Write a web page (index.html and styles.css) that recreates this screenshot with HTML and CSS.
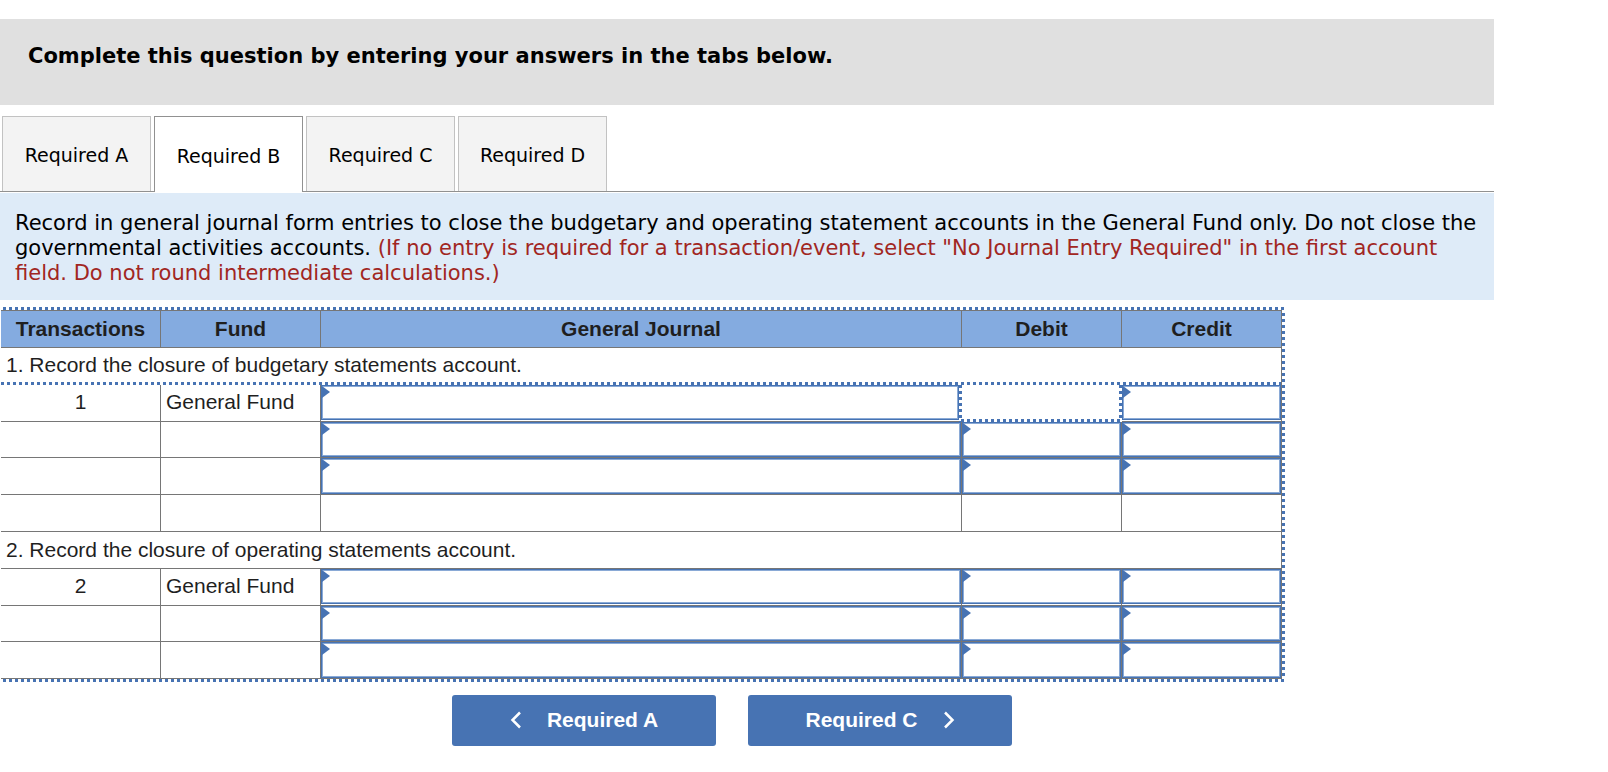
FILE: index.html
```html
<!DOCTYPE html>
<html lang="en">
<head>
<meta charset="utf-8">
<title>General journal entries</title>
<link rel="stylesheet" href="styles.css">
</head>
<body>
<main class="question">
  <h1 class="banner">Complete this question by entering your answers in the tabs below.</h1>

  <div class="tabs" role="tablist">
    <button class="tab" type="button" role="tab" aria-selected="false">Required A</button>
    <button class="tab tab-active" type="button" role="tab" aria-selected="true">Required B</button>
    <button class="tab" type="button" role="tab" aria-selected="false">Required C</button>
    <button class="tab" type="button" role="tab" aria-selected="false">Required D</button>
  </div>

  <p class="instructions">Record in general journal form entries to close the budgetary and operating statement accounts in the General Fund only. Do not close the governmental activities accounts. <span class="note">(If no entry is required for a transaction/event, select "No Journal Entry Required" in the first account field. Do not round intermediate calculations.)</span></p>

  <div class="sheet">
    <table class="journal">
      <colgroup><col class="narrow"><col class="narrow"><col><col class="narrow"><col class="narrow"></colgroup>
      <thead>
        <tr><th scope="col">Transactions</th><th scope="col">Fund</th><th scope="col">General Journal</th><th scope="col">Debit</th><th scope="col">Credit</th></tr>
      </thead>
      <tbody>
        <tr><td class="section section-current" colspan="5">1. Record the closure of budgetary statements account.</td></tr>
        <tr class="first">
          <td class="number">1</td><td class="fund">General Fund</td>
          <td class="entry before-selected"><input type="text" aria-label="Transaction 1 account, line 1"></td>
          <td class="entry selected"><input type="text" aria-label="Transaction 1 debit, line 1"></td>
          <td class="entry"><input type="text" aria-label="Transaction 1 credit, line 1"></td>
        </tr>
        <tr class="short">
          <td></td><td></td>
          <td class="entry"><input type="text" aria-label="Transaction 1 account, line 2"></td>
          <td class="entry"><input type="text" aria-label="Transaction 1 debit, line 2"></td>
          <td class="entry"><input type="text" aria-label="Transaction 1 credit, line 2"></td>
        </tr>
        <tr>
          <td></td><td></td>
          <td class="entry"><input type="text" aria-label="Transaction 1 account, line 3"></td>
          <td class="entry"><input type="text" aria-label="Transaction 1 debit, line 3"></td>
          <td class="entry"><input type="text" aria-label="Transaction 1 credit, line 3"></td>
        </tr>
        <tr><td></td><td></td><td></td><td></td><td></td></tr>
        <tr><td class="section" colspan="5">2. Record the closure of operating statements account.</td></tr>
        <tr class="first">
          <td class="number">2</td><td class="fund">General Fund</td>
          <td class="entry"><input type="text" aria-label="Transaction 2 account, line 1"></td>
          <td class="entry"><input type="text" aria-label="Transaction 2 debit, line 1"></td>
          <td class="entry"><input type="text" aria-label="Transaction 2 credit, line 1"></td>
        </tr>
        <tr class="short">
          <td></td><td></td>
          <td class="entry"><input type="text" aria-label="Transaction 2 account, line 2"></td>
          <td class="entry"><input type="text" aria-label="Transaction 2 debit, line 2"></td>
          <td class="entry"><input type="text" aria-label="Transaction 2 credit, line 2"></td>
        </tr>
        <tr>
          <td></td><td></td>
          <td class="entry"><input type="text" aria-label="Transaction 2 account, line 3"></td>
          <td class="entry"><input type="text" aria-label="Transaction 2 debit, line 3"></td>
          <td class="entry"><input type="text" aria-label="Transaction 2 credit, line 3"></td>
        </tr>
      </tbody>
    </table>
  </div>

  <nav class="steps" aria-label="Question parts">
    <button class="step" type="button">
      <svg class="chevron" viewBox="0 0 12 18" aria-hidden="true"><path d="M10 1.5 2.5 9l7.500 7.500"/></svg>
      Required A
    </button>
    <button class="step" type="button">
      Required C
      <svg class="chevron" viewBox="0 0 12 18" aria-hidden="true"><path d="M2 1.500 9.500 9 2 16.500"/></svg>
    </button>
  </nav>
</main>
</body>
</html>
```

FILE: styles.css
```css
:root {
  --blue: #4773b3;
  --blue-soft: #8aaad6;
  --grid: #767676;
  --dots-x: repeating-linear-gradient(to right, var(--blue) 0 3px, #fff 3px 6px);
  --dots-y: repeating-linear-gradient(to bottom, var(--blue) 0 3px, #fff 3px 6px);
}

* {
  box-sizing: border-box;
}

body {
  margin: 0;
  background: #fff;
  color: #000;
  font-family: Verdana, "DejaVu Sans", sans-serif;
}

.question {
  margin-right: 114px;
  padding-top: 19px;
}

.banner {
  margin: 0;
  padding: 25px 28px 36px;
  background: #e0e0e0;
  font-size: 21px;
  line-height: 25px;
  font-weight: 700;
}

.tabs {
  display: flex;
  gap: 3px;
  margin-top: 11px;
  padding-left: 2px;
  border-bottom: 1px solid #919191;
}

.tab {
  width: 149px;
  height: 75px;
  padding: 2px 0 0;
  border: 1px solid #c2c2c2;
  border-bottom: 0;
  background: #f3f3f3;
  color: #000;
  font: 19px/24px Verdana, "DejaVu Sans", sans-serif;
}

.tab-active {
  height: 76px;
  margin-bottom: -1px;
  border-color: #919191;
  background: #fff;
}

.instructions {
  margin: 1px 0 0;
  padding: 18px 15px 14px;
  background: #deebf8;
  font-size: 21px;
  line-height: 25px;
}

.note {
  color: #a12622;
}

.sheet {
  margin: 7px 209px 0 0;
  padding: 3px 3px 3px 1px;
  background:
    var(--dots-x) 3px 0 / 100% 3px no-repeat,
    var(--dots-x) 3px 100% / 100% 3px no-repeat,
    var(--dots-y) 100% 0 / 3px 100% no-repeat;
}

.journal {
  width: 100%;
  border-spacing: 0;
  border-top: 1px solid var(--grid);
  table-layout: fixed;
  background: #fff;
  color: #1f1f1f;
  font: 21px/24px Arial, "Liberation Sans", sans-serif;
}

.narrow {
  width: 160px;
}

.journal tr {
  height: 37px;
}

.journal .short {
  height: 36px;
}

.journal th,
.journal td {
  position: relative;
  height: inherit;
  padding: 0;
  border: solid var(--grid);
  border-width: 0 1px 1px 0;
  text-align: left;
}

.journal th {
  background: #84abe0;
  text-align: center;
}

.journal .section,
.journal .fund {
  padding-left: 5px;
}

.journal .section-current {
  padding-bottom: 3px;
  border-bottom: 0;
  background: var(--dots-x) 0 100% / 100% 3px no-repeat;
}

.journal .number {
  text-align: center;
}

.journal .number,
.journal .fund {
  padding-bottom: 2px;
}

.entry input {
  display: block;
  width: 100%;
  height: 36px;
  margin: 0;
  padding: 0 12px;
  border: 1px solid var(--blue);
  border-radius: 0;
  outline: 0;
  box-shadow: inset 0 0 0 1px var(--blue-soft);
  background: #fff;
  font: inherit;
}

.short .entry input {
  height: 35px;
}

.first .entry input {
  height: 35px;
  margin-bottom: 1px;
}

.entry::before {
  content: "";
  position: absolute;
  top: 1px;
  left: 1px;
  width: 8px;
  height: 12px;
  background: var(--blue);
  clip-path: polygon(0 0, 100% 50%, 0 100%);
}

.journal .before-selected {
  padding-right: 2px;
}

.first .selected input {
  border-color: transparent;
  box-shadow: none;
}

.journal .selected::before {
  content: none;
}

/* Selection frame drawn over the borders of the neighbouring cells */
.selected::after {
  content: "";
  position: absolute;
  z-index: 1;
  top: 0;
  right: -1px;
  bottom: -1px;
  left: -3px;
  background:
    var(--dots-x) 2px 100% / 100% 3px no-repeat,
    var(--dots-y) 0 0 / 3px 100% no-repeat,
    var(--dots-y) 100% 0 / 3px 100% no-repeat;
  pointer-events: none;
}

.steps {
  display: flex;
  justify-content: center;
  gap: 32px;
  margin-top: 13px;
  padding-right: 30px;
}

.step {
  display: flex;
  align-items: center;
  justify-content: center;
  gap: 25px;
  width: 264px;
  height: 51px;
  padding: 0 0 2px;
  border: 0;
  border-radius: 3px;
  background: var(--blue);
  color: #fff;
  font: 700 21px/24px Arial, "Liberation Sans", sans-serif;
}

.chevron {
  width: 12px;
  height: 18px;
  fill: none;
  stroke: #fff;
  stroke-width: 2.5;
}
```
